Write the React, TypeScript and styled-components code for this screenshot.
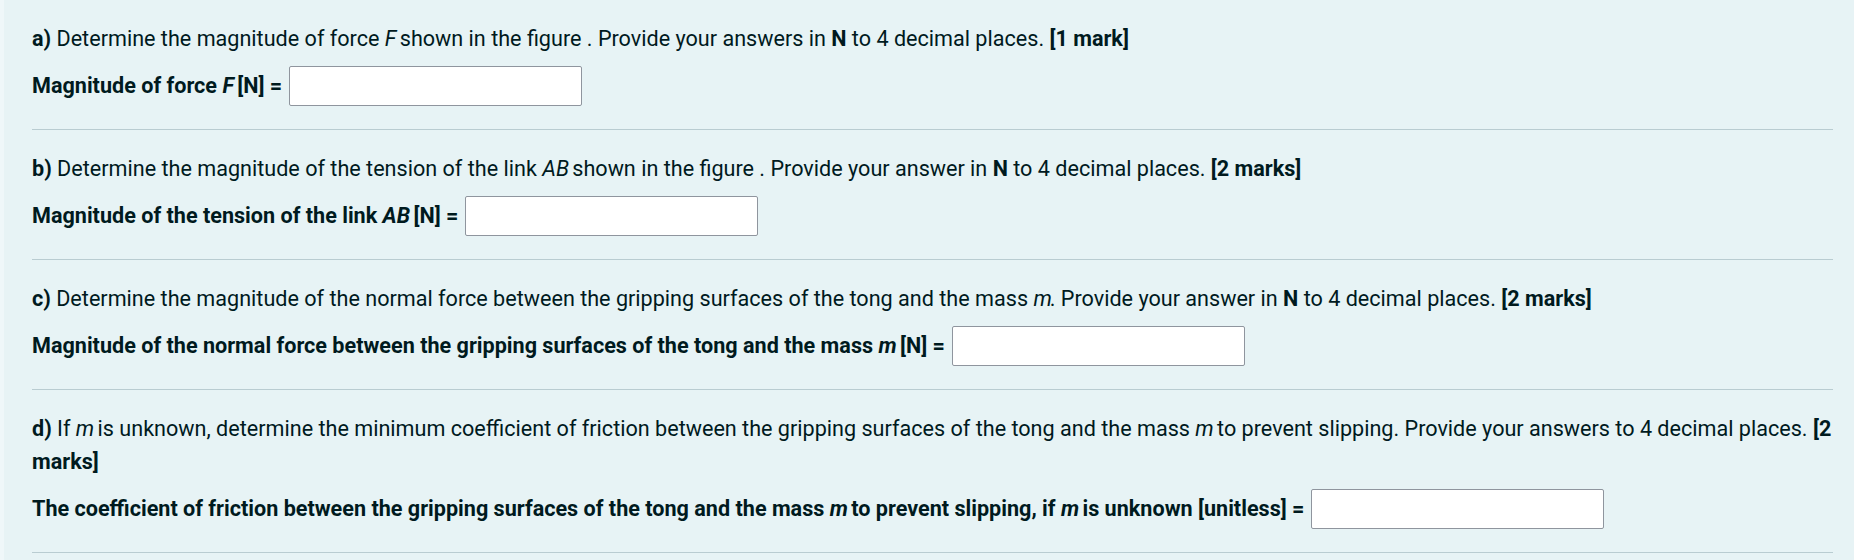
import React from 'react';
import styled, { createGlobalStyle } from 'styled-components';

const GlobalStyle = createGlobalStyle`
  html, body {
    margin: 0;
    padding: 0;
    background: #e7f3f5;
  }
  body {
    font-family: Roboto, "Noto Sans", "Liberation Sans", sans-serif;
    color: #001a1e;
  }
`;

const Formulation = styled.div`
  background: #e7f3f5;
  border-left: 4px solid #eff7f9;
  padding: 0 21px 0 28px;
  min-height: 560px;
  box-sizing: border-box;
`;

const Part = styled.div`
  padding: 22px 0 23px;
  border-bottom: 1px solid #b9ccd1;
`;

const Prompt = styled.p`
  margin: 0 -10px 11px 0;
  font-size: 21.6px;
  line-height: 33px;
`;

const Letter = styled.strong`
  font-weight: 700;
`;

// math variables sit a little tighter against the following word
const Var = styled.i`
  font-style: italic;
  margin-right: -2px;
`;

const AnswerRow = styled.label`
  display: flex;
  align-items: center;
  font-size: 21.6px;
  font-weight: 700;
  line-height: 40px;
`;

const AnswerInput = styled.input`
  box-sizing: border-box;
  width: 293px;
  height: 40px;
  margin-left: 7px;
  border: 1px solid #8f959e;
  border-radius: 2px;
  background: #fff;
  font: inherit;
  font-weight: 400;
  padding: 0 10px;
`;

const parts = [
  {
    id: 'a',
    prompt: (
      <>
        <Letter>a)</Letter> Determine the magnitude of force <Var>F</Var> shown in the figure . Provide your answers in <strong>N</strong> to 4 decimal places. <strong>[1 mark]</strong>
      </>
    ),
    label: (
      <>
        Magnitude of force&nbsp;<Var>F</Var>&nbsp;[N] =
      </>
    ),
  },
  {
    id: 'b',
    prompt: (
      <>
        <Letter>b)</Letter> Determine the magnitude of the tension of the link <Var>AB</Var> shown in the figure . Provide your answer in <strong>N</strong> to 4 decimal places. <strong>[2 marks]</strong>
      </>
    ),
    label: (
      <>
        Magnitude of the tension of the link&nbsp;<Var>AB</Var>&nbsp;[N] =
      </>
    ),
  },
  {
    id: 'c',
    prompt: (
      <>
        <Letter>c)</Letter> Determine the magnitude of the normal force between the gripping surfaces of the tong and the mass <Var>m</Var>. Provide your answer in <strong>N</strong> to 4 decimal places. <strong>[2 marks]</strong>
      </>
    ),
    label: (
      <>
        Magnitude of the normal force between the gripping surfaces of the tong and the mass&nbsp;<Var>m</Var>&nbsp;[N] =
      </>
    ),
  },
  {
    id: 'd',
    prompt: (
      <>
        <Letter>d)</Letter> If <Var>m</Var> is unknown, determine the minimum coefficient of friction between the gripping surfaces of the tong and the mass <Var>m</Var> to prevent slipping. Provide your answers to 4 decimal places. <strong>[2 marks]</strong>
      </>
    ),
    label: (
      <>
        The coefficient of friction between the gripping surfaces of the tong and the mass&nbsp;<Var>m</Var>&nbsp;to prevent slipping, if&nbsp;<Var>m</Var>&nbsp;is unknown [unitless] =
      </>
    ),
  },
];

export default function App() {
  return (
    <>
      <GlobalStyle />
      <Formulation>
        {parts.map((part) => (
          <Part key={ part.id }>
            <Prompt>{ part.prompt }</Prompt>
            <AnswerRow>
              <span>{ part.label }</span>
              <AnswerInput type='text' />
            </AnswerRow>
          </Part>
        ))}
      </Formulation>
    </>
  );
}
